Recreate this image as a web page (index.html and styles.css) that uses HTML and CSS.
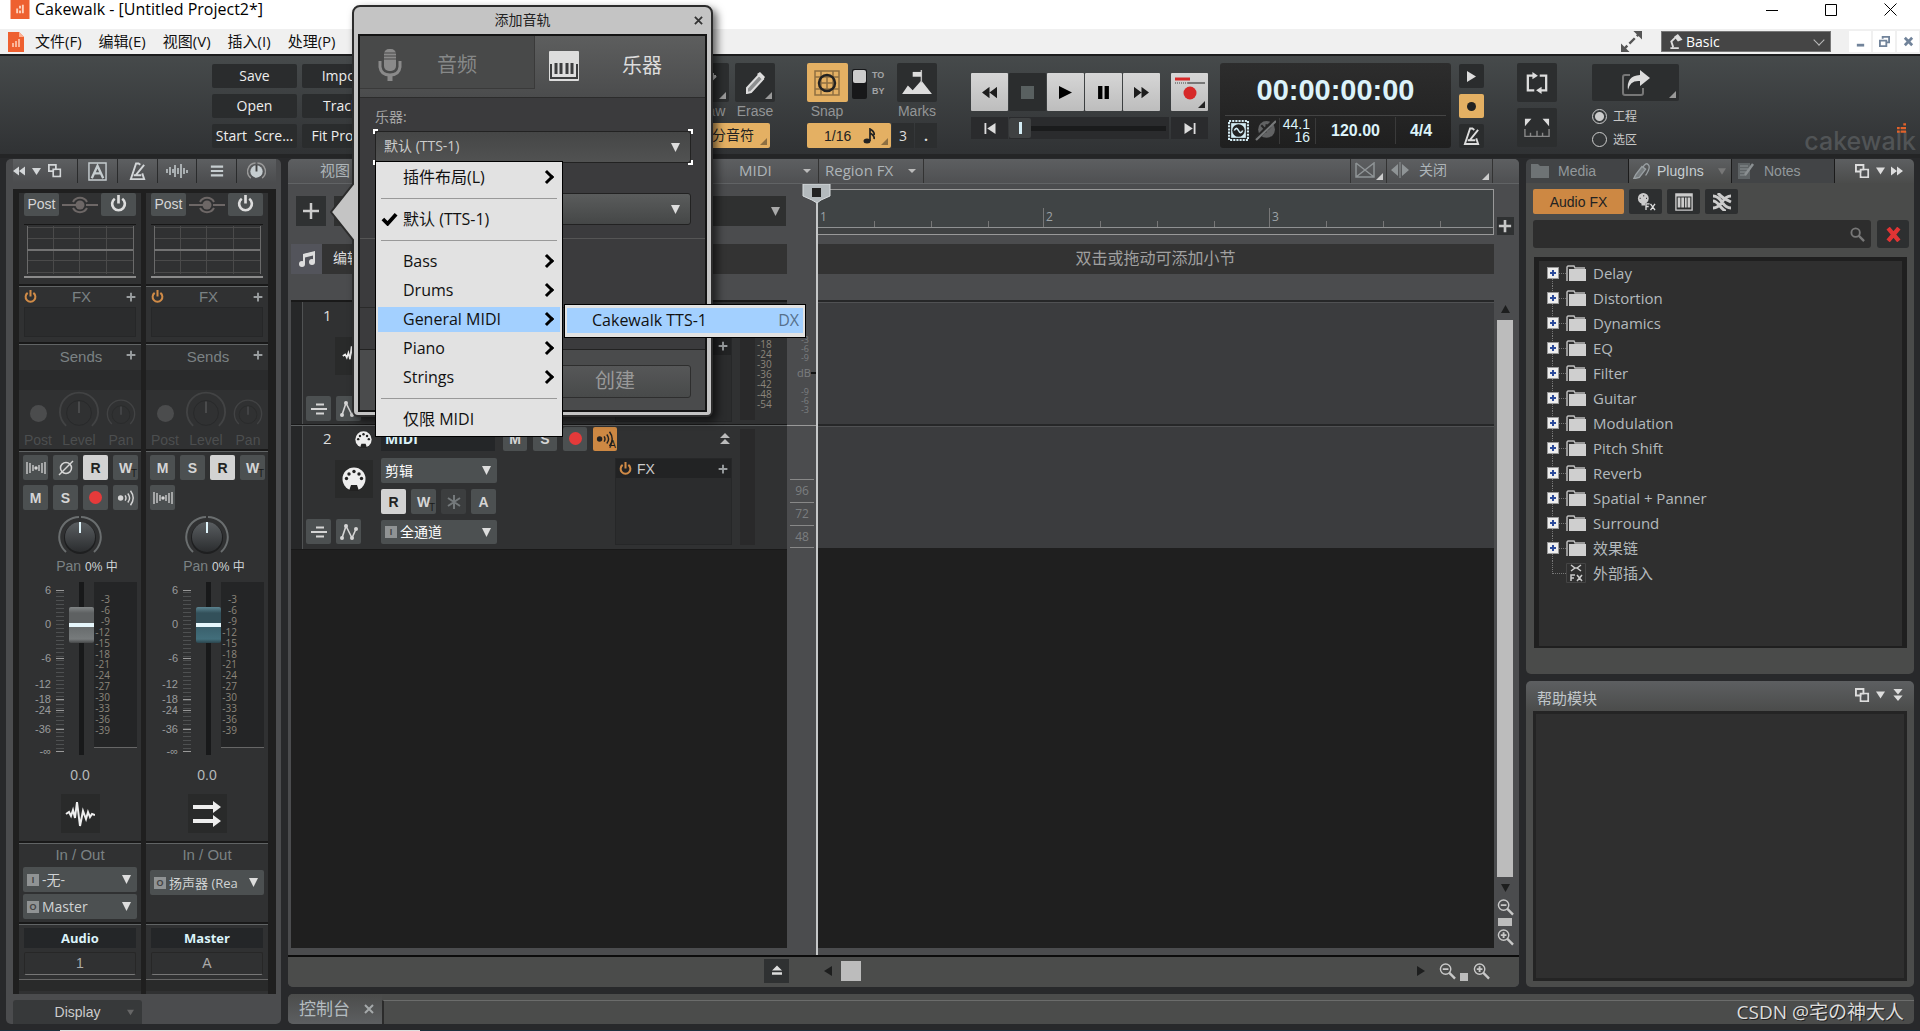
FILE: index.html
```html
<!DOCTYPE html>
<html lang="zh-CN">
<head>
<meta charset="utf-8">
<title>Cakewalk - [Untitled Project2*]</title>
<link rel="stylesheet" href="styles.css">
</head>
<body>
<svg class="defs" aria-hidden="true">
  <symbol id="power" viewBox="0 0 16 16"><path d="M4.500 3.500a6 6 0 1 0 7 0M8 0v8" fill="none" stroke="currentColor" stroke-width="2.500"/></symbol>
  <symbol id="plus" viewBox="0 0 16 16"><path d="M8 1v14M1 8h14" stroke="currentColor" stroke-width="3"/></symbol>
  <symbol id="dock" viewBox="0 0 16 16"><path d="M1 1h8v7H1zM6 6h8v8H6z" fill="none" stroke="currentColor" stroke-width="2"/><path d="M7 7h6v6H7z" fill="#505254"/></symbol>
  <symbol id="down" viewBox="0 0 10 10"><path d="M0 1h10L5 9z" fill="currentColor"/></symbol>
  <symbol id="ffwd" viewBox="0 0 16 12"><path d="M0 0l8 6-8 6zM8 0l8 6-8 6z" fill="currentColor"/></symbol>
  <symbol id="rewd" viewBox="0 0 16 12"><path d="M8 0L0 6l8 6zM16 0L8 6l8 6z" fill="currentColor"/></symbol>
  <symbol id="metro" viewBox="0 0 18 20"><path d="M12 3L10 1.500H7.500L2 18h14l-2-6" fill="none" stroke="currentColor" stroke-width="2"/><path d="M7 14L16 3M5 14h8" stroke="currentColor" stroke-width="2"/></symbol>
  <symbol id="inter" viewBox="0 0 20 12"><path d="M1 0v12M4 1v10M7 3v6M13 3v6M16 1v10M19 0v12" stroke="currentColor" stroke-width="1.300"/><circle cx="10" cy="6" r="1.700" fill="currentColor"/></symbol>
  <symbol id="phase" viewBox="0 0 18 18"><circle cx="9" cy="9" r="5.500" fill="none" stroke="currentColor" stroke-width="1.500"/><path d="M2 16L16 2" stroke="currentColor" stroke-width="1.500"/></symbol>
  <symbol id="echo" viewBox="0 0 20 18"><circle cx="4" cy="9" r="3" fill="currentColor"/><path d="M9 6q2 3 0 6M12 4q4 5 0 10M15 1q6 8 0 16" fill="none" stroke="currentColor" stroke-width="1.600"/></symbol>
  <symbol id="wave" viewBox="0 0 30 26"><path d="M1 13l3-2 2 4 2-6 2 8 2-16 3 24 3-15 3 8 2-7 2 5 2-3 3 1" fill="none" stroke="currentColor" stroke-width="2"/></symbol>
  <symbol id="din" viewBox="0 0 24 24"><circle cx="12" cy="12" r="11.500" fill="currentColor"/><g fill="#222"><circle cx="4.500" cy="11.500" r="1.700"/><circle cx="7" cy="7" r="1.700"/><circle cx="12" cy="4.500" r="1.700"/><circle cx="17" cy="7" r="1.700"/><circle cx="19.500" cy="11.500" r="1.700"/><path d="M7 24l2-6h6l2 6z"/></g></symbol>
  <symbol id="lanes" viewBox="0 0 16 12"><path d="M5 1.500h8M0 6h9M8 6h8M5 10.500h8" stroke="currentColor" stroke-width="2"/></symbol>
  <symbol id="auto" viewBox="0 0 18 16"><path d="M2 14L6 2l6 12 4-9" fill="none" stroke="currentColor" stroke-width="1.600"/><g fill="currentColor"><circle cx="2" cy="14" r="2"/><circle cx="6" cy="2" r="2"/><circle cx="12" cy="14" r="2"/><circle cx="16" cy="5" r="2"/></g></symbol>
  <symbol id="corner" viewBox="0 0 8 8"><path d="M8 0v8H0z" fill="currentColor"/></symbol>
  <symbol id="mago" viewBox="0 0 18 18"><circle cx="7" cy="7" r="5.500" fill="none" stroke="currentColor" stroke-width="1.500"/><path d="M11 11l6 6" stroke="currentColor" stroke-width="2.500"/><path d="M4 7h6" stroke="currentColor" stroke-width="2"/></symbol>
  <symbol id="magi" viewBox="0 0 18 18"><circle cx="7" cy="7" r="5.500" fill="none" stroke="currentColor" stroke-width="1.500"/><path d="M11 11l6 6" stroke="currentColor" stroke-width="2.500"/><path d="M4 7h6M7 4v6" stroke="currentColor" stroke-width="2"/></symbol>
  <symbol id="biglevel" viewBox="0 0 44 44"><path d="M8.500 36.500A20 20 0 1 1 35.500 36.500" fill="none" stroke="#424344" stroke-width="2"/><circle cx="22" cy="23" r="13" fill="#303132" stroke="#28292a"/><path d="M22 11v12" stroke="#4c4d4e" stroke-width="2"/></symbol>
  <symbol id="panknob" viewBox="0 0 44 44"><path d="M8 37A20 20 0 0 1 21 2M23 2A20 20 0 0 1 36 37" fill="none" stroke="#6a6e6f" stroke-width="2"/><circle cx="22" cy="23" r="16" fill="#1e1f20"/><circle cx="22" cy="22" r="15" fill="url(#knobfill)"/><path d="M22 7v11" stroke="#dff4fb" stroke-width="2"/></symbol>
  <symbol id="patch" viewBox="0 0 36 18"><path d="M0 9h18M24 9h12" stroke="#6d6766" stroke-width="2"/><circle cx="18" cy="9" r="4.500" fill="#6d6766"/><path d="M11 6a8 8 0 0 1 14 0M11 12a8 8 0 0 0 14 0" fill="none" stroke="#6d6766" stroke-width="2"/></symbol>
  <symbol id="eqgrid" viewBox="0 0 112 54"><path d="M0 .5h112" stroke="#171717"/><path d="M29.500 2v48M55.500 2v48M82.500 2v48M3 14.500h106M3 36.500h106M3 48.500h106M3 3.500h106" stroke="#4a4a4a"/><path d="M3.500 2v48M109.500 2v48" stroke="#6a6a6a"/><path d="M3 26h106" stroke="#727272" stroke-width="2"/><path d="M0 53h112" stroke="#8a8a8a" stroke-width="2"/></symbol>
  <symbol id="folder" viewBox="0 0 21 17"><path d="M1 16V2l1-1h6l1 2h10" fill="none" stroke="#bdbdbd" stroke-width="1.500"/><path d="M3 4h17v12H3z" fill="#cfcfcf"/></symbol>
  <symbol id="keys" viewBox="0 0 30 30"><rect width="30" height="30" rx="1" fill="currentColor"/><path d="M2 13v14h26V13" fill="none" stroke="#3c3d3e" stroke-width="2"/><path d="M7 12v11M12 12v11M18 12v11M23 12v11" stroke="#3c3d3e" stroke-width="3"/></symbol>
  <linearGradient id="knobfill" x1="0" y1="0" x2="0" y2="1"><stop offset="0" stop-color="#5a5e61"/><stop offset="1" stop-color="#2b2d2f"/></linearGradient>
</svg>

<div class="app">
  <header class="titlebar">
    <svg class="app-icon" viewBox="0 0 20 20"><path d="M0 0h20v20H0z" fill="#ee6030"/><path d="M7 9v5M10 6v3M10 11v3M13 5v9" stroke="#ffd2bd" stroke-width="2"/></svg>
    <h1>Cakewalk - [Untitled Project2*]</h1>
    <div class="win-buttons">
      <button aria-label="最小化"><svg viewBox="0 0 13 13"><path d="M0 7.500h12" stroke="#000"/></svg></button>
      <button aria-label="最大化"><svg viewBox="0 0 13 13"><path d="M.5 1.500h11v11H.5z" fill="none" stroke="#000"/></svg></button>
      <button aria-label="关闭窗口"><svg viewBox="0 0 13 13"><path d="M.5.5l12 12M12.500.5l-12 12" stroke="#000"/></svg></button>
    </div>
  </header>

  <nav class="menubar">
    <svg class="doc-icon" viewBox="0 0 16 20"><path d="M0 0h11l5 5v15H0z" fill="#ee6030"/><path d="M11 0v5h5z" fill="#ffb193"/><path d="M5 11v4M8 9v6M11 7v8" stroke="#ffd2bd" stroke-width="1.500"/></svg>
    <a href="#">文件(F)</a><a href="#">编辑(E)</a><a href="#">视图(V)</a><a href="#">插入(I)</a><a href="#">处理(P)</a>
    <div class="menubar-right">
      <svg class="expand" viewBox="0 0 22 22"><path d="M1 21L21 1" stroke="#555" stroke-width="2.500" stroke-dasharray="8 3"/><path d="M13 0h9v9zM0 13v9h9z" fill="#555"/></svg>
      <label class="basic"><svg viewBox="0 0 14 16"><path d="M1 15h9M4 14L2 8l5-5" fill="none" stroke="#ddd" stroke-width="2"/><path d="M5 3l4-3 5 6-5 2z" fill="#ddd"/></svg><select aria-label="工作区"><option>Basic</option></select></label>
      <div class="mdi">
        <button aria-label="最小化项目"><svg viewBox="0 0 12 14"><path d="M2 11h8" stroke="#71839a" stroke-width="3"/></svg></button>
        <button aria-label="还原项目"><svg viewBox="0 0 12 14"><path d="M4 4V2h7v6H9M1 6h7v6H1z" fill="none" stroke="#71839a" stroke-width="2"/></svg></button>
        <button aria-label="关闭项目"><svg viewBox="0 0 12 14"><path d="M2 3l8 8M10 3l-8 8" stroke="#71839a" stroke-width="3"/></svg></button>
      </div>
    </div>
  </nav>

  <section class="toolbar">
    <div class="commands">
      <button>Save</button><button>Import</button>
      <button>Open</button><button>Tracks</button>
      <button>Start&nbsp; Scre...</button><button>Fit Project</button>
    </div>
    <div class="tools">
      <div class="tool-row">
        <div class="tool"><button class="dark-btn" aria-label="Draw"><svg class="glyph" viewBox="0 0 22 22"><path d="M4 18L18 4M15 1v6M12 4h6" stroke="#ccc" stroke-width="2"/></svg><svg class="corner"><use href="#corner"/></svg></button><span>Draw</span></div>
        <div class="tool"><button class="dark-btn" aria-label="Erase"><svg class="glyph" viewBox="0 0 22 22"><path d="M3 16L15 3l4 4L7 20l-4 1z" fill="#8d8f90" stroke="#ddd" stroke-width="2"/><path d="M13 2l3-2 5 5-2 3z" fill="#ddd"/></svg><svg class="corner"><use href="#corner"/></svg></button><span>Erase</span></div>
      </div>
      <button class="amber note">分音符<svg class="corner"><use href="#corner"/></svg></button>
    </div>
    <div class="snap">
      <div class="tool-row">
        <div class="tool"><button class="amber snap-btn" aria-label="Snap"><svg viewBox="0 0 26 26"><path d="M1 1h24v24H1zM1 7h24M1 19h24M7 1v24M19 1v24M13 5v16M5 13h16" fill="none" stroke="#8e6f42" stroke-width="1.500"/><circle cx="13" cy="13" r="8" fill="none" stroke="#222" stroke-width="2.500"/></svg></button><span>Snap</span></div>
        <button class="toby" aria-label="TO / BY"></button>
        <div class="toby-labels"><span>TO</span><span>BY</span></div>
        <div class="tool"><button class="dark-btn" aria-label="Marks"><svg class="marks" viewBox="0 0 32 26"><path d="M0 25l6-9 5 5 9-10 11 14z" fill="#ddd"/><path d="M20 0v13" stroke="#bbb" stroke-width="1.500"/><path d="M11 2h9v5h-9z" fill="#ddd"/></svg></button><span>Marks</span></div>
      </div>
      <div class="res-row">
        <button class="amber res">1/16<svg class="n16" viewBox="0 0 12 16"><ellipse cx="4" cy="13" rx="3.500" ry="2.500" fill="#222"/><path d="M7 13V1q5 3 4 6M7 5q5 3 4 6" fill="none" stroke="#222" stroke-width="1.700"/></svg><svg class="corner"><use href="#corner"/></svg></button>
        <button class="flat">3</button><button class="flat">.</button>
      </div>
    </div>
    <div class="transport">
      <button class="tp" aria-label="快退"><svg viewBox="0 0 16 12"><use href="#rewd"/></svg></button>
      <button class="tp off" aria-label="停止"><svg viewBox="0 0 12 12"><path d="M0 0h12v12H0z" fill="#596060"/></svg></button>
      <button class="tp" aria-label="播放"><svg viewBox="0 0 12 12"><path d="M0 0l12 6-12 6z"/></svg></button>
      <button class="tp" aria-label="暂停"><svg viewBox="0 0 12 12"><path d="M1 0h4v12H1zM7 0h4v12H7z"/></svg></button>
      <button class="tp" aria-label="快进"><svg viewBox="0 0 16 12"><use href="#ffwd"/></svg></button>
      <button class="tp rec" aria-label="录音"><svg viewBox="0 0 37 37"><path d="M4 5h15" stroke="#d62828" stroke-width="3"/><path d="M4 9h14" stroke="#888" stroke-width="2" stroke-dasharray="1 1"/><path d="M17 9h17" stroke="#777" stroke-width="2"/><circle cx="19" cy="19" r="6.500" fill="#d62828"/><path d="M34 27v7h-7z" fill="#222"/></svg></button>
      <button class="tp2" aria-label="到开头"><svg viewBox="0 0 12 12"><path d="M1 0v12" stroke="#ddd" stroke-width="2"/><path d="M12 0v12L3 6z" fill="#ddd"/></svg></button>
      <label class="scrub"><input type="range" min="0" max="100" value="0" aria-label="播放位置"></label>
      <button class="tp2 end" aria-label="到结尾"><svg viewBox="0 0 12 12"><path d="M11 0v12" stroke="#ddd" stroke-width="2"/><path d="M0 0v12l9-6z" fill="#ddd"/></svg></button>
    </div>
    <div class="clock">
      <output class="time">00:00:00:00</output>
      <div class="clock-row">
        <svg class="chip" viewBox="0 0 20 20"><path d="M1 1h18v18H1z" fill="none" stroke="#d4ecf4" stroke-width="2" stroke-dasharray="2 1"/><path d="M3 3h14v14H3z" fill="#d4ecf4"/><circle cx="10" cy="10" r="6" fill="#222"/><path d="M6 10q2-4 4 0t4 0" fill="none" stroke="#d4ecf4" stroke-width="1.500"/></svg>
        <svg class="chip" viewBox="0 0 20 20"><circle cx="11" cy="9" r="8" fill="#626364"/><path d="M6 5l3 3M11 4v4M15 6l-3 3M7 11h4" stroke="#262626" stroke-width="2"/><path d="M0 19L19 0" stroke="#262626" stroke-width="4"/><path d="M1 19L20 1" stroke="#77797a" stroke-width="2"/></svg>
        <span class="rate"><b>44.1</b><b>16</b></span><span class="tempo">120.00</span><span class="sig">4/4</span>
      </div>
    </div>
    <div class="modes">
      <button aria-label="播放模式"><svg viewBox="0 0 10 12"><path d="M0 0l10 6-10 6z" fill="#ddd"/></svg></button>
      <button class="amber" aria-label="录音模式"><svg viewBox="0 0 10 12"><circle cx="5" cy="6" r="5" fill="#222"/></svg></button>
      <button aria-label="节拍器"><svg class="m" viewBox="0 0 18 20"><use href="#metro"/></svg></button>
    </div>
    <div class="loops">
      <button aria-label="循环"><svg viewBox="0 0 24 24"><path d="M9 4H2v16h7M15 4h7v16h-7" fill="none" stroke="#ddd" stroke-width="2.500"/><path d="M7 0l6 4-6 4zM17 16l-6 4 6 4z" fill="#ddd"/></svg></button>
      <button aria-label="穿插"><svg viewBox="0 0 28 20"><path d="M1 0h7L1 8zM27 0h-7l7 8z" fill="#ddd"/><path d="M1 11v8h26v-8M7 15v4M14 13v6M20 15v4" fill="none" stroke="#888" stroke-width="1.500"/></svg></button>
    </div>
    <div class="export">
      <button class="dark-btn" aria-label="导出"><svg class="share" viewBox="0 0 28 26"><path d="M8 5H3q-2 0-2 2v16q0 2 2 2h16q2 0 2-2v-5" fill="none" stroke="#777" stroke-width="2"/><path d="M6 20Q4 6 18 5V0l10 8-10 8v-5Q8 10 6 20z" fill="#ddd"/></svg><svg class="corner"><use href="#corner"/></svg></button>
      <label><input type="radio" name="scope" checked>工程</label>
      <label><input type="radio" name="scope">选区</label>
    </div>
    <div class="logo"><svg viewBox="0 0 10 10"><path d="M0 5h3M0 9h3M4 5h3M4 9h3M7 1h3M7 5h3M7 9h3" stroke="#e2622a" stroke-width="2.500"/></svg><span>cakewalk</span></div>
  </section>

  <main class="workspace">
    <aside class="inspector">
      <div class="insp-tabs">
        <button class="wide" aria-label="停靠"><svg class="w14"><use href="#rewd"/></svg><svg class="w10"><use href="#down"/></svg><svg class="w15"><use href="#dock"/></svg></button>
        <button aria-label="剪辑属性"><svg viewBox="0 0 20 20"><path d="M1 1h18v18H1z" fill="none" stroke="#c6cdd0" stroke-width="1.500"/><path d="M4 17L10 4l6 13M6 12h8" fill="none" stroke="#c6cdd0" stroke-width="2.500"/></svg></button>
        <button aria-label="节拍"><svg><use href="#metro"/></svg></button>
        <button aria-label="波形"><svg class="w22" viewBox="0 0 22 16"><path d="M1 6v4M4 4v8M7 6v4M9 2v12M12 5v6M15 1v14M18 5v6M21 7v3" stroke="#c6cdd0" stroke-width="1.500"/></svg></button>
        <button aria-label="列表"><svg class="w15" viewBox="0 0 16 16"><path d="M1 3h14M1 8h14M1 13h14" stroke="#c6cdd0" stroke-width="2.500"/></svg></button>
        <button aria-label="通道"><svg viewBox="0 0 20 20"><path d="M4 17A9 9 0 0 1 9 1M11 1a9 9 0 0 1 5 16" fill="none" stroke="#999" stroke-width="1.500"/><circle cx="10" cy="10" r="6.500" fill="#c6cdd0"/><path d="M10 3v7" stroke="#444" stroke-width="2"/></svg></button>
      </div>
      <div class="strips">
        <article class="strip">
          <section class="s-eq"><div class="eq-top"><button>Post</button><svg class="patch"><use href="#patch"/></svg><button aria-label="EQ 开关"><svg class="pw"><use href="#power"/></svg></button></div><svg class="eqgrid"><use href="#eqgrid"/></svg></section>
          <section class="s-fx"><div class="cap"><svg class="on"><use href="#power"/></svg><span>FX</span><svg class="add"><use href="#plus"/></svg></div><div class="fxbox"></div></section>
          <section class="s-send"><div class="cap"><i></i><span>Sends</span><svg class="add"><use href="#plus"/></svg></div><div class="band"></div><div class="knobs"><div><em></em><span>Post</span></div><div><svg class="k44"><use href="#biglevel"/></svg><span>Level</span></div><div><svg class="k30"><use href="#biglevel"/></svg><span>Pan</span></div></div></section>
          <section class="s-mix">
            <div class="btns"><button aria-label="交错"><svg class="ic20"><use href="#inter"/></svg></button><button aria-label="反相"><svg class="ic18"><use href="#phase"/></svg></button><button class="lit">R</button><button>W<sub>T</sub></button><button>M</button><button>S</button><button aria-label="录音准备"><i class="dot"></i></button><button aria-label="输入监听"><svg class="ic18"><use href="#echo"/></svg></button></div>
            <svg class="pan"><use href="#panknob"/></svg>
            <p class="panval">Pan <b>0% 中</b></p>
            <div class="fader">
              <svg class="scale" viewBox="0 0 46 175"><path d="M33 8.500h8M33 42.500h8M33 76.500h8M33 102.500h8M33 117.500h8M33 128.500h8M33 147.500h8M33 169.500h8" stroke="#999"/><path d="M37 10v160" stroke="#4e5051" stroke-width="8" stroke-dasharray="1 3"/><text x="28" y="12">6</text><text x="28" y="46">0</text><text x="28" y="80">-6</text><text x="28" y="106">-12</text><text x="28" y="121">-18</text><text x="28" y="132">-24</text><text x="28" y="151">-36</text><text x="28" y="173">-∞</text></svg>
              <input type="range" min="0" max="100" value="82" aria-label="音量">
              <ol><li>-3</li><li>-6</li><li>-9</li><li>-12</li><li>-15</li><li>-18</li><li>-21</li><li>-24</li><li>-27</li><li>-30</li><li>-33</li><li>-36</li><li>-39</li></ol>
            </div>
            <p class="gain">0.0</p>
            <div class="kind"><svg><use href="#wave"/></svg></div>
          </section>
          <section class="s-io"><h3>In / Out</h3><label class="combo"><b>I</b><select aria-label="输入"><option>-无-</option></select></label><label class="combo"><b>O</b><select aria-label="输出"><option>Master</option></select></label></section>
          <section class="s-name"><strong>Audio</strong><span>1</span></section>
        </article>
        <article class="strip">
          <section class="s-eq"><div class="eq-top"><button>Post</button><svg class="patch"><use href="#patch"/></svg><button aria-label="EQ 开关"><svg class="pw"><use href="#power"/></svg></button></div><svg class="eqgrid"><use href="#eqgrid"/></svg></section>
          <section class="s-fx"><div class="cap"><svg class="on"><use href="#power"/></svg><span>FX</span><svg class="add"><use href="#plus"/></svg></div><div class="fxbox"></div></section>
          <section class="s-send"><div class="cap"><i></i><span>Sends</span><svg class="add"><use href="#plus"/></svg></div><div class="band"></div><div class="knobs"><div><em></em><span>Post</span></div><div><svg class="k44"><use href="#biglevel"/></svg><span>Level</span></div><div><svg class="k30"><use href="#biglevel"/></svg><span>Pan</span></div></div></section>
          <section class="s-mix">
            <div class="btns"><button>M</button><button>S</button><button class="lit">R</button><button>W<sub>T</sub></button><button aria-label="交错"><svg class="ic20"><use href="#inter"/></svg></button></div>
            <svg class="pan"><use href="#panknob"/></svg>
            <p class="panval">Pan <b>0% 中</b></p>
            <div class="fader blue">
              <svg class="scale" viewBox="0 0 46 175"><path d="M33 8.500h8M33 42.500h8M33 76.500h8M33 102.500h8M33 117.500h8M33 128.500h8M33 147.500h8M33 169.500h8" stroke="#999"/><path d="M37 10v160" stroke="#4e5051" stroke-width="8" stroke-dasharray="1 3"/><text x="28" y="12">6</text><text x="28" y="46">0</text><text x="28" y="80">-6</text><text x="28" y="106">-12</text><text x="28" y="121">-18</text><text x="28" y="132">-24</text><text x="28" y="151">-36</text><text x="28" y="173">-∞</text></svg>
              <input type="range" min="0" max="100" value="82" aria-label="主音量">
              <ol><li>-3</li><li>-6</li><li>-9</li><li>-12</li><li>-15</li><li>-18</li><li>-21</li><li>-24</li><li>-27</li><li>-30</li><li>-33</li><li>-36</li><li>-39</li></ol>
            </div>
            <p class="gain">0.0</p>
            <div class="kind"><svg viewBox="0 0 30 26"><path d="M1 4h20V0l8 6-8 6V8H1zM1 18h20v-4l8 6-8 6v-4H1z" fill="#eee"/></svg></div>
          </section>
          <section class="s-io one"><h3>In / Out</h3><label class="combo"><b>O</b><select aria-label="主输出"><option>扬声器 (Rea</option></select></label></section>
          <section class="s-name"><strong>Master</strong><span>A</span></section>
        </article>
      </div>
      <button class="display">Display<svg><use href="#down"/></svg></button>
    </aside>

    <section class="arranger">
      <div class="arr-head">
        <button class="tab view">视图</button><button class="tab">MIDI<i></i></button><button class="tab region">Region FX<i></i></button>
        <button class="tab fade" aria-label="交叉淡化"><svg class="xf" viewBox="0 0 20 16"><path d="M1 1v14h18V1L1 15M1 1l18 14" fill="none" stroke="#8f9496" stroke-width="1.500"/></svg><svg class="corner"><use href="#corner"/></svg></button><button class="tab close"><svg class="rip" viewBox="0 0 18 16"><path d="M7 2L0 8l7 6zM11 2l7 6-7 6z" fill="#8f9496"/><path d="M9 0v16" stroke="#8f9496"/></svg>关闭<svg class="corner"><use href="#corner"/></svg></button>
      </div>
      <div class="arr-body">
        <div class="tracks">
          <div class="t-tools"><button class="addtrack" aria-label="添加音轨"><svg viewBox="0 0 16 16"><path d="M8 0v16M0 8h16" stroke="#ccc" stroke-width="2.500"/></svg></button><label class="filter"><select aria-label="预设"><option></option></select></label></div>
          <div class="t-edit"><svg viewBox="0 0 31 30"><path d="M13 20V11l10-2v9" fill="none" stroke="#ddd" stroke-width="2"/><path d="M12 10l12-3v4l-12 3z" fill="#ddd"/><circle cx="11" cy="20" r="3" fill="#ddd"/><circle cx="21" cy="18" r="3" fill="#ddd"/></svg><span>编辑</span></div>
          <div class="t-list">
            <article class="track">
              <div class="t-left"><span class="num">1</span><span class="kindbox"><svg><use href="#wave"/></svg></span><div class="t-foot"><button aria-label="音轨层"><svg class="ic16"><use href="#lanes"/></svg></button><button aria-label="自动化"><svg class="ic18"><use href="#auto"/></svg></button></div></div>
              <div class="t-main"><div class="t-r1"></div><div class="t-r2"><div></div><div class="t-fx"><div><svg class="on"><use href="#power"/></svg><span>FX</span><svg class="add"><use href="#plus"/></svg></div></div></div></div>
              <div class="t-meter"><i></i><ol><li>-18</li><li>-24</li><li>-30</li><li>-36</li><li>-42</li><li>-48</li><li>-54</li></ol></div>
            </article>
            <article class="track">
              <div class="t-left"><span class="num">2<svg class="ic18"><use href="#din"/></svg></span><span class="kindbox"><svg><use href="#din"/></svg></span><div class="t-foot"><button aria-label="音轨层"><svg class="ic16"><use href="#lanes"/></svg></button><button aria-label="自动化"><svg class="ic18"><use href="#auto"/></svg></button></div></div>
              <div class="t-main">
                <div class="t-r1"><strong>MIDI</strong><button>M</button><button>S</button><button aria-label="录音准备"><i class="dot"></i></button><button class="orange" aria-label="输入回放"><svg class="ic18"><use href="#echo"/></svg><sub>A</sub></button><svg class="coll" viewBox="0 0 10 12"><path d="M5 0l5 5H0zM5 6l5 5H0z" fill="#bbb"/></svg></div>
                <div class="t-r2"><div class="t-ctl"><label class="combo"><select aria-label="编辑筛选"><option>剪辑</option></select></label><div class="t-b"><button class="lit">R</button><button>W<sub>T</sub></button><button class="dim" aria-label="冻结"><svg viewBox="0 0 16 16"><path d="M8 1v14M2 4l12 8M14 4L2 12" stroke="#74797b" stroke-width="2"/></svg></button><button>A</button></div><label class="combo"><b>I</b><select aria-label="通道"><option>全通道</option></select></label></div><div class="t-fx"><div><svg class="on"><use href="#power"/></svg><span>FX</span><svg class="add"><use href="#plus"/></svg></div></div></div>
              </div>
              <div class="t-meter"><i></i></div>
            </article>
          </div>
        </div>
        <div class="vscale">
          <div class="vs1"><span>-3</span><span>-6</span><span>-9</span><span class="db">dB<i></i></span><span>-9</span><span>-6</span><span>-3</span></div>
          <div class="vs2"><span>96</span><span>72</span><span>48</span></div>
        </div>
        <div class="clips">
          <div class="ruler"><div class="bar"><span>1</span></div><div class="bar"><span>2</span></div><div class="bar"><span>3</span></div></div>
          <div class="lane-hint">双击或拖动可添加小节</div>
          <div class="lanes"><div></div><div></div></div>
          <div class="playhead"><svg viewBox="0 0 29 19"><path d="M1 0h27v12l-9 4-4 3-5-3-9-4z" fill="#b4babd" stroke="#d8dcde"/><path d="M10 4h9v9h-9z" fill="#222"/></svg></div>
        </div>
        <div class="vscroll">
          <button class="vadd" aria-label="添加轨道窗格"><svg><use href="#plus"/></svg></button>
          <svg class="up" viewBox="0 0 10 10"><path d="M5 0l5 9H0z" fill="#1d1e1e"/></svg><div class="vthumb"></div><svg class="up" viewBox="0 0 10 10"><path d="M0 1h10L5 10z" fill="#1d1e1e"/></svg>
          <svg class="mg"><use href="#mago"/></svg><i></i><svg class="mg"><use href="#magi"/></svg>
        </div>
      </div>
      <div class="arr-foot">
        <button class="eject" aria-label="展开总线"><svg viewBox="0 0 12 12"><path d="M6 0l6 6H0zM0 8h12v3H0z" fill="#ddd"/></svg></button>
        <div class="hscroll"><svg class="ar" viewBox="0 0 8 10"><path d="M8 0v10L0 5z" fill="#1d1e1e"/></svg><i class="hthumb"></i><svg class="ar rt" viewBox="0 0 8 10"><path d="M0 0v10l8-5z" fill="#1d1e1e"/></svg><svg class="mg"><use href="#mago"/></svg><i class="hz"></i><svg class="mg"><use href="#magi"/></svg></div>
      </div>
    </section>

    <div class="side">
      <section class="browser">
        <div class="b-tabs">
          <button><svg viewBox="0 0 18 16"><path d="M0 1h7l2 2h9v12H0z" fill="#6e7375"/></svg>Media</button>
          <button class="cur"><svg viewBox="0 0 20 18"><path d="M1 17l2-4 7-9 4 3-7 9-4 1z" fill="#777c7e" stroke="#999fa2" stroke-width="1.500"/><path d="M11 5q3-6 6-3t-3 12" fill="none" stroke="#999fa2" stroke-width="1.500"/></svg>PlugIns<svg class="tri"><use href="#down"/></svg></button>
          <button><svg viewBox="0 0 18 18"><path d="M1 1h12v16H1z" fill="#5f6466"/><path d="M3 4h8M3 7h8M3 10h6M3 13h6" stroke="#8b9092"/><path d="M8 13l8-11" stroke="#8b9092" stroke-width="2.500"/></svg>Notes</button>
          <div class="b-ctl"><svg class="w15"><use href="#dock"/></svg><svg class="w10"><use href="#down"/></svg><svg class="w14"><use href="#ffwd"/></svg></div>
        </div>
        <div class="b-kinds"><button class="afx">Audio FX</button>
          <button aria-label="MIDI FX"><svg viewBox="0 0 22 20"><circle cx="8" cy="6" r="6" fill="#ccc"/><path d="M6 9h4v5H6z" fill="#ccc"/><path d="M4 6h1M8 3h1M11 6h1" stroke="#333" stroke-width="1.500"/><path d="M11 19v-7h4M11 15h3M16 12l5 7M21 12l-5 7" fill="none" stroke="#ddd" stroke-width="1.500"/></svg></button>
          <button aria-label="乐器"><svg class="key" viewBox="0 0 20 20"><path d="M1 1h18v18H1z" fill="none" stroke="#ccc" stroke-width="1.500"/><path d="M1 1h18v3H1zM3 5h3v11H3zM7 5h3v11H7zM11 5h2v11h-2zM14 5h3v11h-3z" fill="#ccc"/></svg></button>
          <button aria-label="ReWire"><svg viewBox="0 0 20 18"><path d="M1 3q5 0 9 6t9 6M1 8q3 0 7 5t6 5M6 0q4 5 13 9M1 15q5 0 9-6t9-6" fill="none" stroke="#ccc" stroke-width="3"/></svg></button>
        </div>
        <div class="b-search"><label><input type="text" aria-label="搜索插件"><svg viewBox="0 0 16 16"><circle cx="6" cy="6" r="4.500" fill="none" stroke="#777" stroke-width="2"/><path d="M9 9l6 6" stroke="#777" stroke-width="2.500"/></svg></label><button aria-label="清除"><svg viewBox="0 0 14 14"><path d="M2 1l10 12M12 1L2 13" stroke="#e03434" stroke-width="4"/></svg></button></div>
        <ul class="tree">
          <li><i></i><svg><use href="#folder"/></svg>Delay</li><li><i></i><svg><use href="#folder"/></svg>Distortion</li><li><i></i><svg><use href="#folder"/></svg>Dynamics</li><li><i></i><svg><use href="#folder"/></svg>EQ</li><li><i></i><svg><use href="#folder"/></svg>Filter</li><li><i></i><svg><use href="#folder"/></svg>Guitar</li><li><i></i><svg><use href="#folder"/></svg>Modulation</li><li><i></i><svg><use href="#folder"/></svg>Pitch Shift</li><li><i></i><svg><use href="#folder"/></svg>Reverb</li><li><i></i><svg><use href="#folder"/></svg>Spatial + Panner</li><li><i></i><svg><use href="#folder"/></svg>Surround</li><li><i></i><svg><use href="#folder"/></svg>效果链</li>
          <li class="leaf"><svg viewBox="0 0 20 20"><path d="M.5.5h19v19H.5z" fill="none" stroke="#454545"/><path d="M5 2l4 3h2l4-3M5 8l4-3h2l4 3M5 18v-6h4M5 15h3M11 12l5 6M16 12l-5 6" fill="none" stroke="#ccc" stroke-width="1.500"/></svg>外部插入</li>
        </ul>
      </section>
      <section class="help"><div class="h-head"><h2>帮助模块</h2><svg class="w15"><use href="#dock"/></svg><svg class="w10"><use href="#down"/></svg><svg class="dd" viewBox="0 0 10 13"><path d="M0 0h10L5 6zM0 7h10l-5 6z" fill="#ddd"/></svg></div><div class="h-body"></div></section>
    </div>

    <div class="dock">
      <div class="dock-tab">控制台<button aria-label="关闭控制台"><svg viewBox="0 0 10 10"><path d="M1 1l8 8M9 1L1 9" stroke="#a5a9aa" stroke-width="2"/></svg></button></div>
      <div class="dock-rest"><span class="mark">CSDN @宅の神大人</span></div>
    </div>
  </main>
  <div class="taskline"><i></i></div>
</div>

<section class="dialog" role="dialog" aria-label="添加音轨">
  <svg class="pointer" viewBox="0 0 24 58"><path d="M24 0L1 29l23 29" fill="#c4c4c4" stroke="#2c2c2c" stroke-width="2"/></svg>
  <div class="d-title"><h2>添加音轨</h2><button aria-label="关闭对话框"><svg viewBox="0 0 10 10"><path d="M1 1l8 8M9 1L1 9" stroke="#333" stroke-width="2"/></svg></button></div>
  <div class="d-in">
    <div class="d-tabs">
      <button class="audio"><svg viewBox="0 0 24 32"><rect x="6" width="12" height="22" rx="5" fill="#8a8a8a"/><path d="M6 4h12M6 7h12M6 10h12" stroke="#484848"/><path d="M2 12v6q1 8 10 8t10-8v-6" fill="none" stroke="#8a8a8a" stroke-width="3"/><path d="M12 25v7" stroke="#8a8a8a" stroke-width="5"/></svg><span>音频</span></button>
      <button class="inst"><svg viewBox="0 0 30 30"><use href="#keys"/></svg><span>乐器</span></button>
    </div>
    <div class="d-body">
      <label for="inst">乐器:</label>
      <div class="d-sel focus"><select id="inst"><option>默认 (TTS-1)</option></select></div>
      <div class="d-sel two"><select aria-label="输出端口"><option></option></select></div>
      <hr><hr class="low">
    </div>
    <div class="d-foot"><button>创建</button></div>
  </div>
</section>

<ul class="menu" role="menu">
  <li class="sub">插件布局(L)</li><li class="sep"></li>
  <li><svg viewBox="0 0 18 14"><path d="M2 7l5 5L16 2" fill="none" stroke="#000" stroke-width="4"/></svg>默认 (TTS-1)</li><li class="sep"></li>
  <li class="sub">Bass</li><li class="sub">Drums</li><li class="sub sel">General MIDI</li><li class="sub">Piano</li><li class="sub">Strings</li><li class="sep"></li>
  <li>仅限 MIDI</li>
</ul>
<ul class="menu submenu" role="menu"><li class="sel">Cakewalk TTS-1<span>DX</span></li></ul>
</body>
</html>
```
FILE: styles.css
```css
* { box-sizing: border-box; margin: 0; padding: 0; }
body { background: #28292b; color: #c8c8c8; font: 14px/18px "Open Sans", "Noto Sans CJK SC", sans-serif; }
ul, ol { list-style: none; }
i, em { font-style: normal; }
button, select, input { font: inherit; color: inherit; border: 0; background: none; }
select { appearance: none; outline: 0; width: 100%; min-width: 0; }
button { display: flex; align-items: center; justify-content: center; position: relative; }
svg { display: block; flex: none; }
a { color: inherit; text-decoration: none; }
.defs { position: absolute; width: 0; height: 0; }
.corner { position: absolute; right: 3px; bottom: 3px; width: 7px; height: 7px; color: #999; }
.w14 { width: 14px; height: 10px; } .w10 { width: 9px; height: 10px; } .w15 { width: 15px; height: 15px; }
.ic16 { width: 16px; height: 12px; } .ic18 { width: 18px; height: 18px; } .ic20 { width: 20px; height: 12px; }

.app { display: flex; flex-direction: column; min-height: 100vh; }

/* window chrome */
.titlebar { display: flex; align-items: flex-start; height: 29px; padding-left: 10px; background: #fff; color: #000; }
.app-icon { width: 20px; height: 19px; }
.titlebar h1 { flex: 1; padding-left: 5px; font-size: 16px; font-weight: 400; line-height: 18px; }
.win-buttons { display: flex; gap: 46px; padding: 3px 23px 0 0; }
.win-buttons svg { width: 13px; height: 13px; }
.menubar { display: flex; align-items: center; height: 25px; padding-left: 8px; background: #f0f0f0; color: #111; }
.menubar a { margin-right: 17px; line-height: 22px; font-size: 15px; padding-bottom: 2px; }
.doc-icon { width: 16px; height: 20px; margin-right: 11px; }
.menubar-right { display: flex; align-items: center; margin-left: auto; }
.expand { width: 21px; height: 21px; margin-right: 19px; }
.basic { display: flex; align-items: center; position: relative; width: 170px; height: 21px; padding-left: 7px; background: #454545; border: 1px solid #777; color: #fff; }
.basic svg { width: 14px; height: 15px; }
.basic select { padding-left: 3px; }
.basic::after { content: ""; position: absolute; right: 7px; top: 4px; width: 7px; height: 7px; border: solid #bbb; border-width: 0 1px 1px 0; transform: rotate(45deg); }
.mdi { display: flex; gap: 2px; padding: 0 1px 0 18px; }
.mdi button { width: 22px; height: 21px; background: #fff; }
.mdi svg { width: 11px; height: 13px; }

/* control bar */
.toolbar { display: flex; align-items: flex-start; height: 104px; padding: 7px 4px 0 212px; border-top: 2px solid #1c1d1e; border-bottom: 4px solid #242526; background: linear-gradient(#464a4b, #303234); }
.commands { display: grid; grid-template-columns: 85px 84px; gap: 6px 5px; padding-top: 1px; }
.commands button { height: 24px; background: #2a2c2d; color: #eee; border-radius: 2px; }
.tools { width: 120px; margin-left: 264px; }
.tool-row { display: flex; gap: 6px; justify-content: flex-end; height: 60px; }
.tools .tool-row { margin-right: -5px; }
.tool { display: flex; flex-direction: column; width: 40px; align-items: center; color: #939596; font-family: "Liberation Sans", sans-serif; }
.dark-btn { width: 40px; height: 39px; background: #2c2e2f; border-radius: 2px; }
.glyph { width: 22px; height: 22px; }
.amber { background: #e4b063; color: #222; border-radius: 2px; }
.amber .corner { color: #8d6f42; }
.note { width: 120px; height: 25px; justify-content: flex-end; padding: 0 16px 2px 0; }
.snap { width: 130px; margin-left: 37px; }
.snap .tool-row { gap: 5px; justify-content: flex-start; }
.snap-btn { width: 41px; height: 39px; }
.snap-btn svg { width: 26px; height: 26px; }
.toby { width: 15px; height: 30px; margin-top: 6px; background: #17181a; border-radius: 2px; align-items: flex-start; }
.toby::before { content: ""; width: 13px; height: 13px; margin-top: 1px; background: #ccc; border-radius: 2px; }
.toby-labels { display: flex; flex-direction: column; gap: 4px; width: 20px; padding-top: 6px; color: #a2a4a5; font: 700 9px/12px "Liberation Sans", sans-serif; }
.marks { width: 31px; height: 25px; }
.res-row { display: flex; gap: 1px; }
.res { width: 84px; height: 25px; justify-content: flex-start; padding-left: 17px; gap: 12px; font-family: "Liberation Sans", sans-serif; }
.n16 { width: 12px; height: 16px; }
.flat { flex: 1; height: 25px; background: #2c2e2f; color: #ddd; }
.flat:last-child { font-weight: 700; }
.transport { display: grid; grid-template-columns: repeat(6, 37px); column-gap: 1px; row-gap: 6px; margin: 10px 0 0 34px; }
.tp { height: 38px; background: linear-gradient(#d6d6d6, #bdbdbd); border-radius: 1px; color: #1d1d1d; }
.tp svg { width: 15px; height: 13px; }
.tp.off { background: #2b2d2e; }
.tp.rec { margin-left: 10px; width: 37px; }
.tp.rec svg { width: 37px; height: 37px; }
.tp2 { height: 22px; background: #2a2b2d; }
.tp2.end { width: 37px; margin-left: 10px; }
.tp2 svg { width: 12px; height: 11px; }
.scrub { grid-column: span 4; width: 160px; height: 22px; background: #2a2b2d; }
.scrub input { display: block; appearance: none; width: 157px; height: 22px; background: linear-gradient(transparent 9px, #1a1b1c 9px, #1a1b1c 14px, transparent 14px); }
.scrub input::-webkit-slider-thumb { appearance: none; width: 22px; height: 20px; border-radius: 2px; background: linear-gradient(90deg, transparent 10px, #d4ecf4 10px, #d4ecf4 13px, transparent 13px) no-repeat 0 4px / 22px 12px, #3f4142; }
.clock { width: 231px; height: 85px; margin-left: 22px; padding: 5px 5px 0; background: linear-gradient(#2d2d2d, #1f1f1f); border-radius: 3px; color: #dcf3fa; }
.time { display: block; height: 48px; border-bottom: 1px solid #444; text-align: center; font: 700 29px/44px "Liberation Sans", sans-serif; }
.clock-row { display: flex; align-items: center; height: 29px; }
.chip { width: 21px; height: 21px; margin: 0 3px; }
.rate { display: flex; flex-direction: column; align-items: flex-end; width: 37px; padding-right: 5px; border: solid #3a3a3a; border-width: 0 1px; font: 14px/13px "Liberation Sans", sans-serif; }
.rate b { font-weight: 400; }
.tempo, .sig { font: 700 16px/27px "Liberation Sans", sans-serif; }
.tempo { width: 80px; text-align: center; border-right: 1px solid #3a3a3a; }
.sig { flex: 1; text-align: center; }
.modes { display: grid; gap: 6px; margin: 1px 0 0 8px; }
.modes button { width: 25px; height: 24px; background-color: #2a2c2d; border-radius: 2px; }
.modes button.amber { background-color: #e4b063; }
.modes svg { width: 9px; height: 11px; color: #ddd; }
.modes .m { width: 17px; height: 19px; }
.loops { display: grid; gap: 6px; margin-left: 33px; }
.loops button { width: 40px; height: 39px; background: #2c2e2f; border-radius: 2px; }
.loops svg { width: 26px; height: 22px; }
.export { width: 87px; margin: 1px 0 0 35px; font-size: 12px; }
.export .dark-btn { width: 87px; height: 37px; margin-bottom: 4px; }
.share { width: 28px; height: 26px; }
.export label { display: flex; align-items: center; gap: 6px; height: 23px; }
.export input { appearance: none; width: 15px; height: 15px; border: 1px solid #ccc; border-radius: 50%; }
.export input:checked { background: radial-gradient(#ccc 4px, transparent 5px); }
.logo { position: relative; align-self: flex-end; margin-left: auto; color: #515456; font: 500 25px/26px "Inter", sans-serif; }
.logo svg { position: absolute; right: 10px; top: -5px; width: 9px; height: 10px; }

/* workspace */
.workspace { flex: 1; display: grid; grid-template-columns: 274px 1fr 388px; grid-template-rows: 1fr 30px; column-gap: 7px; row-gap: 7px; padding: 1px 6px 6px; }
.inspector { grid-row: span 2; margin-right: -1px; display: flex; flex-direction: column; padding: 0 5px 0 7px; background: #4b4c4e; border-radius: 5px; }
.insp-tabs { display: flex; height: 24px; margin-bottom: 6px; gap: 1px; background: #2a2b2c; }
.insp-tabs button { flex: 1; background: linear-gradient(#5d5f61, #4b4c4e); color: #d3d6d8; }
.insp-tabs .wide { flex: 0 0 64px; gap: 7px; justify-content: flex-start; }
.insp-tabs svg { height: 19px; width: 19px; }
.insp-tabs .w14 { width: 12px; height: 10px; } .insp-tabs .w10 { width: 9px; height: 9px; } .insp-tabs .w15 { width: 14px; height: 14px; } .insp-tabs .w22 { width: 22px; height: 16px; }
.strips { flex: 1; display: grid; grid-template-columns: 122px 122px; gap: 5px; padding: 4px 0 0 6px; background: #1f1f1f; }
.strip { display: flex; flex-direction: column; background: #303132; font-family: "Liberation Sans", "Noto Sans CJK SC", sans-serif; color: #7b8284; }
.strip section { padding: 0 5px; }
.strip section + section { border-top: 2px solid #191919; box-shadow: inset 0 1px #616465; }
.strip::after { content: ""; flex: 1; margin-bottom: 3px; border-top: 1px solid #666; background: #292a2a; }
.s-eq { height: 91px; }
.eq-top { display: flex; align-items: center; justify-content: space-between; height: 23px; margin-bottom: 8px; }
.eq-top button { width: 35px; height: 23px; background: #4c5051; border-radius: 2px; color: #d5d5d5; font-size: 14px; padding-bottom: 2px; }
.patch { width: 36px; height: 18px; } .pw { width: 17px; height: 17px; color: #ddd; } .eqgrid { width: 112px; height: 54px; }
.s-fx { height: 58px; }
.cap { display: flex; align-items: center; justify-content: space-between; height: 21px; font-size: 15px; }
.cap i { width: 12px; }
.on { width: 13px; height: 13px; color: #d08b47; } .add { width: 10px; height: 10px; color: #9a9ea0; }
.fxbox { height: 30px; border: 1px solid #262728; background: #2b2c2d; }
.s-send { height: 107px; }
.s-send .cap { height: 26px; }
.s-send .add { margin-bottom: 5px; }
.band { height: 20px; margin: 0 -5px; background: #2a2b2c; }
.knobs { display: flex; justify-content: space-between; color: #4c4e4f; font-size: 14px; }
.knobs div { display: flex; flex-direction: column; align-items: center; justify-content: flex-end; height: 57px; }
.knobs span { line-height: 14px; }
.knobs em { width: 17px; height: 17px; margin-bottom: 11px; border-radius: 50%; background: #4b4c4d; }
.k44 { width: 42px; height: 42px; } .k30 { width: 30px; height: 30px; margin-bottom: 4px; }
.s-mix { height: 392px; }
.btns { display: grid; grid-template-columns: repeat(4, 25px); gap: 5px; height: 55px; margin: 4px -1px 0; grid-auto-rows: 25px; }
.btns button, .t-b button, .t-r1 button, .t-foot button { width: 25px; height: 25px; background: #4c5051; border-radius: 2px; color: #d5d5d5; font: 700 14px/18px "Liberation Sans", sans-serif; }
.btns .lit, .t-b .lit { background: #d2d2d2; color: #222; }
sub { position: absolute; right: 1px; bottom: 0; font: 10px/12px "Liberation Sans", sans-serif; color: #1a1a1a; }
.dot { width: 13px; height: 13px; border-radius: 50%; background: #e53a3a; }
.pan { width: 44px; height: 44px; margin: 5px auto 0; }
.panval { height: 15px; padding-left: 14px; text-align: center; font-size: 14px; line-height: 15px; }
.panval b { color: #cfd4d6; font-weight: 400; font-size: 12px; }
.fader { display: grid; grid-template-columns: 46px 25px 43px; height: 175px; margin: 8px -1px 0; }
.scale { width: 46px; height: 175px; fill: #9a9c9d; font-size: 11px; text-anchor: end; }
.fader input { appearance: none; writing-mode: vertical-lr; direction: rtl; width: 25px; height: 173px; background: linear-gradient(90deg, transparent 10px, #18191a 10px, #18191a 15px, transparent 15px); }
.fader input::-webkit-slider-thumb { appearance: none; width: 25px; height: 36px; border-radius: 2px; background: linear-gradient(#828687, #5e6162 6px, #5e6162 16px, #e6f6fb 16px, #e6f6fb 20px, #686c6d 20px, #777b7c 32px, #454748); }
.fader.blue input::-webkit-slider-thumb { background: linear-gradient(#5b8390, #33505a 6px, #33505a 16px, #e6f6fb 16px, #e6f6fb 20px, #3a606c 20px, #426e7b 32px, #2b444d); }
.fader ol { display: flex; flex-direction: column; justify-content: space-between; height: 166px; padding: 12px 27px 12px 0; background: #242526; border-bottom: 1px solid #666; color: #8c867c; font: 10px/10px "Open Sans", sans-serif; text-align: right; }
.fader li { margin-left: -4px; }
.gain { margin-top: 9px; text-align: center; color: #b4b8ba; }
.kind { display: grid; place-items: center; width: 39px; height: 39px; margin: 10px auto 0; background: #292a2a; color: #eee; }
.kind svg { width: 30px; height: 26px; }
.s-io { height: 81px; }
.s-io h3 { font-size: 15px; font-weight: 400; line-height: 24px; text-align: center; }
.combo { display: flex; align-items: center; position: relative; height: 25px; background: #4c5051; border-radius: 2px; padding: 0 22px 0 4px; color: #d0d3d4; font: 14px/18px "Open Sans", "Noto Sans CJK SC", sans-serif; }
.combo b { flex: none; width: 12px; height: 12px; margin-right: 3px; background: #909394; color: #444; font: 700 9px/12px "Liberation Sans", sans-serif; text-align: center; }
.combo::after, .filter::after, .d-sel::after { content: ""; position: absolute; right: 6px; top: 8px; width: 9px; height: 9px; background: #ddd; clip-path: polygon(0 0, 100% 0, 50% 100%); }
.s-io .combo { margin: 0 -1px 2px; }
.s-io.one .combo { margin-top: 3px; padding-right: 16px; font-size: 13px; }
.strip .s-name { height: 57px; padding-top: 4px; text-align: center; }
.s-name strong { display: block; height: 20px; margin-bottom: 4px; background: #242628; color: #dcf3fa; font: 700 13px/20px "Open Sans", sans-serif; }
.s-name span { display: block; height: 23px; border: 1px solid #272727; border-bottom-color: #777; border-radius: 2px; color: #aaa; line-height: 20px; }
.display { width: 129px; height: 24px; margin: 6px 0 0; background: #37393a; border-radius: 3px 3px 0 0; color: #ccc; font-family: "Liberation Sans", sans-serif; font-size: 14px; }
.display svg { position: absolute; right: 8px; width: 7px; height: 9px; color: #666; }

/* arranger */
.arranger { display: flex; flex-direction: column; min-width: 0; margin-left: 1px; background: #4b4c4e; border-radius: 5px; overflow: hidden; }
.arr-head { display: flex; height: 25px; padding-left: 7px; padding-right: 26px; background: linear-gradient(#5d5f61, #4f5052); border-bottom: 1px solid #616365; }
.tab { width: 105px; justify-content: flex-start; padding: 0 0 2px 25px; border-right: 1px solid #333; color: #adb4b8; font-size: 15px; }
.tab i { position: absolute; right: 7px; top: 10px; border: 4px solid transparent; border-top-color: #bbb; }
.tab.view { margin-right: 314px; }
.tab.region { padding-left: 6px; }
.tab.fade { width: 37px; margin-left: auto; padding-left: 4px; border-left: 1px solid #333; }
.tab.close { width: 106px; padding-left: 4px; gap: 10px; font-size: 14px; }
.xf { width: 20px; height: 16px; } .rip { width: 18px; height: 16px; }
.tab .corner { color: #ccc; }
.arr-body { flex: 1; display: grid; grid-template-columns: 499px 30px 1fr 25px; min-height: 0; }
.tracks { display: flex; flex-direction: column; padding: 12px 0 7px 3px; }
.t-tools { display: flex; gap: 8px; height: 30px; padding: 0 1px 0 5px; }
.addtrack { width: 30px; background: #2f3132; } .addtrack svg { width: 16px; height: 16px; }
.filter { position: relative; flex: 1; background: #2f3030; }
.filter::after { top: 11px; background: #aaa; }
.t-edit { display: flex; height: 30px; margin: 18px 0 26px; background: #333; line-height: 28px; color: #ddd; }
.t-edit svg { width: 31px; height: 30px; margin-right: 11px; background: #53545b; }
.t-list { flex: 1; background: #1f1f1f; }
.track { display: flex; height: 125px; padding-left: 12px; border-top: 2px solid #191919; border-bottom: 1px solid #191919; background: linear-gradient(90deg, #262728 11px, #505253 11px, #505253 12px, #303132 12px); font-family: "Liberation Sans", "Noto Sans CJK SC", sans-serif; }
.track + .track { border-top: 0; box-shadow: inset 0 1px #5d6061; }
.t-left { width: 78px; display: flex; flex-direction: column; padding-left: 3px; }
.num { display: flex; justify-content: space-between; height: 27px; padding: 6px 9px 0 17px; font: 15px/15px "Open Sans", sans-serif; color: #ddd; }
.num svg { color: #eee; width: 17px; height: 17px; }
.kindbox { display: grid; place-items: center; width: 38px; height: 38px; margin: 8px 0 0 29px; background: #292a2a; color: #eee; }
.kindbox svg { width: 24px; height: 24px; }
.t-foot { display: flex; gap: 5px; margin-top: 21px; }
.t-main { width: 351px; }
.t-r1 { display: flex; align-items: center; gap: 6px; height: 27px; margin-bottom: 6px; }
.t-r1 strong { width: 114px; height: 24px; margin-right: 2px; padding-left: 4px; background: #242628; color: #dcf3fa; font: 700 14px/23px "Open Sans", sans-serif; }
.t-r1 button { width: 24px; height: 24px; }
.t-r1 .orange { background: #cd8843; color: #222; }
.coll { width: 10px; height: 12px; margin: 0 2px 0 auto; }
.t-r2 { display: flex; justify-content: space-between; }
.t-ctl { width: 116px; }
.t-b { display: flex; gap: 5px; margin: 6px 0; }
.t-b .dim { background: #3c3e3f; } .t-b svg { width: 16px; height: 16px; }
.t-ctl .combo { color: #fff; }
.t-ctl .combo:last-child { height: 24px; }
.t-fx { width: 117px; height: 87px; border: 1px solid #262728; background: #2b2c2d; }
.t-fx div { display: flex; align-items: center; gap: 5px; height: 19px; padding: 0 3px; background: #222324; color: #ccc; }
.t-fx .add { margin-left: auto; }
.t-meter { display: flex; gap: 2px; width: 50px; padding: 4px 0 4px 8px; }
.t-meter > i { width: 15px; background: #29292a; }
.t-meter ol { padding-top: 33px; color: #8c867c; font: 10px/10px "Open Sans", sans-serif; }
.vscale { padding: 117px 0 0; color: #7b7e80; }
.vs1 { display: flex; flex-direction: column; height: 125px; padding: 34px 8px 0 10px; border-bottom: 1px solid #999; font: 9px/9px "Open Sans", sans-serif; text-align: right; }
.vs1 .db { margin: 6px 0 10px; font-size: 11px; position: relative; }
.vs1 .db i { position: absolute; right: -8px; top: 4px; width: 6px; height: 2px; background: #111; }
.vs2 { display: flex; flex-direction: column; padding-top: 53px; font-size: 12px; }
.vs2 span { height: 23px; border-top: 1px solid #888; text-align: center; margin: 0 3px; line-height: 21px; }
.vs2 span:last-child { border-bottom: 1px solid #888; }
.clips { position: relative; display: flex; flex-direction: column; min-width: 0; padding: 5px 0 7px; }
.ruler { display: flex; height: 46px; border: 1px solid #999; border-left: 0; background: linear-gradient(#404445 37px, #8f9192 37px, #8f9192 38px, #404243 38px); overflow: hidden; }
.bar { flex: none; width: 226px; height: 37px; background: linear-gradient(90deg, #777 1px, transparent 1px) 0 18px / 226px 19px no-repeat, linear-gradient(90deg, #777 1px, transparent 1px) 0 31px / 57px 6px repeat-x; color: #9ca2a5; font-size: 12px; line-height: 54px; padding-left: 3px; }
.lane-hint { height: 30px; margin: 9px 0 26px; background: #333; text-align: center; line-height: 28px; color: #a0a0a0; font-size: 16px; }
.lanes { flex: 1; background: #1f1f1f; }
.lanes div { height: 124px; background: #3b3c3e; border-top: 2px solid #262728; box-shadow: inset 0 1px #505153; }
.playhead { position: absolute; left: -1px; top: 18px; bottom: 0; width: 2px; background: #c5c7c8; }
.playhead svg { position: absolute; left: -14px; top: -18px; width: 29px; height: 19px; }
.vscroll { display: flex; flex-direction: column; align-items: center; padding: 33px 5px 9px 2px; color: #c8c8c8; }
.vadd { width: 17px; height: 18px; margin-bottom: 68px; background: #2f3132; } .vadd svg { width: 14px; height: 14px; }
.up { width: 9px; height: 9px; margin: 2px 0 6px; }
.vthumb { flex: 1; width: 16px; background: #bcbcbc; margin-bottom: 4px; }
.mg { width: 17px; height: 18px; }
.vscroll > i { width: 14px; height: 8px; margin: 2px 0; background: #bcbcbc; }
.arr-foot { display: flex; align-items: center; height: 32px; padding-bottom: 3px; border-top: 2px solid #0c0c0c; background: #4b4c4b; }
.eject { width: 25px; height: 24px; margin-left: 476px; background: #2f3132; } .eject svg { width: 10px; height: 11px; }
.hscroll { flex: 1; display: flex; align-items: center; padding: 0 29px 0 35px; }
.ar { width: 8px; height: 10px; } .rt { margin: 0 14px 0 auto; }
.hthumb { width: 20px; height: 20px; margin-left: 9px; background: #bcbcbc; }
.hz { align-self: flex-end; width: 8px; height: 8px; margin: 0 5px 0 4px; background: #bcbcbc; }

/* browser and help */
.side { display: flex; flex-direction: column; gap: 7px; }
.browser { height: 515px; background: #4a4b4a; border-radius: 5px; overflow: hidden; }
.b-tabs { display: flex; height: 24px; gap: 1px; background: #1b1b1b; margin-bottom: 6px; }
.b-tabs button { width: 102px; justify-content: flex-start; gap: 9px; padding-left: 5px; background: #424446; color: #92989b; font: 14px/18px "Liberation Sans", sans-serif; }
.b-tabs button svg { width: 18px; height: 18px; }
.b-tabs .cur { background: linear-gradient(#5d5f61, #4b4c4b); color: #c6cdd1; padding-left: 4px; gap: 6px; }
.b-tabs .cur .tri { width: 8px; height: 9px; margin-left: auto; margin-right: 5px; color: #777; }
.b-ctl { flex: 1; display: flex; align-items: center; justify-content: flex-end; gap: 6px; padding-right: 11px; background: linear-gradient(#5d5f61, #4b4c4b); color: #ddd; }
.b-ctl .w14 { width: 12px; }
.b-kinds { display: flex; gap: 5px; padding-left: 7px; margin-bottom: 6px; }
.b-kinds button { width: 33px; height: 25px; background: #2d2f30; border-radius: 2px; color: #ccc; }
.b-kinds .afx { width: 91px; background: #cd8843; color: #222; font: 14px/18px "Liberation Sans", sans-serif; }
.b-kinds svg { width: 20px; height: 18px; }
.b-search { display: flex; gap: 6px; padding: 0 5px 0 7px; height: 28px; margin-bottom: 9px; }
.b-search label { flex: 1; display: flex; align-items: center; padding-right: 6px; background: #2d2d2d; border-radius: 3px; }
.b-search input { flex: 1; outline: 0; padding: 0 6px; }
.b-search svg { width: 15px; height: 15px; }
.b-search button { width: 32px; background: #2d2f30; border-radius: 3px; }
.tree { height: 391px; margin: 0 7px 0 8px; padding: 0 0 0 8px; border: solid #1f1f1f; border-width: 4px 5px 2px; background: #2f2f2f; color: #b4babd; }
.tree li { display: flex; align-items: center; gap: 6px; position: relative; height: 25px; padding-bottom: 1px; font-size: 15px; }
.tree li::before { content: ""; position: absolute; left: 5px; top: 0; width: 14px; height: 25px; border-left: 1px dotted #777; background: linear-gradient(90deg, #777 1px, transparent 1px) 0 12px / 2px 1px repeat-x; }
.tree li:first-child::before { top: 12px; height: 13px; background-position: 0 0; }
.tree .leaf::before { height: 13px; }
.tree i { position: relative; width: 12px; height: 12px; margin-right: 1px; background: linear-gradient(#2b4a9a, #2b4a9a) center / 6px 2px no-repeat, linear-gradient(#2b4a9a, #2b4a9a) center / 2px 6px no-repeat, #eee; border: 1px solid #999; }
.tree svg { width: 21px; height: 17px; }
.tree .leaf svg { width: 20px; height: 20px; margin: 0 1px 0 19px; }
.help { flex: 1; display: flex; flex-direction: column; padding: 0 7px 6px; background: linear-gradient(#5d5f61, #4b4c4b 30px); border-radius: 5px; }
.h-head { display: flex; align-items: center; gap: 6px; height: 30px; padding: 0 4px 2px; color: #ddd; }
.h-head h2 { flex: 1; padding-top: 6px; color: #c0c6c9; font-size: 15px; font-weight: 400; }
.dd { width: 10px; height: 12px; margin-left: 2px; }
.h-body { flex: 1; border: 3px solid #242424; background: #2f2f2f; }

.dock { grid-column: 2 / 4; margin-left: 1px; display: flex; background: #4b4c4b; border-radius: 5px; overflow: hidden; }
.dock-tab { display: flex; align-items: center; gap: 14px; width: 94px; padding-left: 11px; color: #b4bcc0; font-size: 17px; background: linear-gradient(#4b4c4b, #5d5f61); }
.dock-tab svg { width: 10px; height: 10px; }
.dock-rest { flex: 1; margin-top: 6px; padding-right: 10px; border-top: 1px solid #6b6c6b; border-left: 2px solid #2b2b2b; text-align: right; }
.mark { color: #ddd; font-size: 19px; line-height: 22px; text-shadow: 1px 1px #222; }
.taskline { height: 1px; padding-left: 60px; background: #1d303b; }
.taskline i { display: block; width: 360px; height: 1px; background: #ddd; }

/* add-track dialog */
.dialog { position: absolute; left: 352px; top: 5px; width: 361px; height: 412px; display: flex; flex-direction: column; padding: 0 4px 3px; border: 2px solid #2c2c2c; border-radius: 8px 8px 6px 6px; background: #c4c4c4; box-shadow: 4px 4px 8px rgba(0, 0, 0, .6); }
.pointer { position: absolute; left: -24px; top: 176px; width: 24px; height: 58px; }
.d-title { display: flex; align-items: center; justify-content: center; height: 27px; color: #222; }
.d-title h2 { flex: 1; text-align: center; font-size: 14px; font-weight: 400; line-height: 24px; margin-right: -18px; padding: 0 20px 2px 0; }
.d-title button { width: 18px; height: 18px; } .d-title svg { width: 9px; height: 9px; }
.d-in { flex: 1; display: flex; flex-direction: column; border: 2px solid #141414; background: #3b3b3d; }
.d-tabs { display: flex; height: 62px; border-bottom: 1px solid #2c2c2c; background: linear-gradient(#5d5e5e, #4b4c4d); font-size: 20px; }
.d-tabs button { height: 53px; flex: 1; justify-content: flex-start; }
.d-tabs .audio { background: #484949; color: #868888; border: solid #3a3a3a; border-width: 0 1px 1px 0; padding: 6px 0 0 18px; gap: 35px; }
.d-tabs .audio svg { width: 24px; height: 32px; }
.d-tabs .inst { height: 61px; padding: 0 0 2px 14px; gap: 43px; color: #ddd; }
.d-tabs .inst svg { width: 30px; height: 30px; }
.d-body { height: 251px; padding: 10px 14px 0 15px; }
.d-body label { display: block; height: 23px; color: #a4a4a4; }
.d-sel { position: relative; height: 32px; border: 1px solid #222; border-radius: 3px; background: linear-gradient(#454646, #515252); }
.d-sel select { height: 28px; padding-left: 8px; color: #ccc; }
.d-sel::after { right: 10px; top: 11px; }
.focus::before { content: ""; position: absolute; inset: -3px; background: linear-gradient(#fff, #fff) 0 0 / 5px 2px, linear-gradient(#fff, #fff) 0 0 / 2px 5px, linear-gradient(#fff, #fff) 100% 0 / 5px 2px, linear-gradient(#fff, #fff) 100% 0 / 2px 5px, linear-gradient(#fff, #fff) 0 100% / 5px 2px, linear-gradient(#fff, #fff) 0 100% / 2px 5px, linear-gradient(#fff, #fff) 100% 100% / 5px 2px, linear-gradient(#fff, #fff) 100% 100% / 2px 5px; background-repeat: no-repeat; pointer-events: none; }
.d-sel.two { margin-top: 30px; background: linear-gradient(#5a5c5c, #454747); }
.d-body hr { border: 0; border-top: 1px solid #555; margin: 13px -14px 0 -15px; }
.d-body hr.low { margin-top: 68px; border-top-color: #2a2a2a; }
.d-foot { flex: 1; padding: 15px 14px 0 0; border-top: 1px solid #222; background: #4a4b4c; }
.d-foot button { width: 152px; height: 33px; margin-left: auto; padding-bottom: 2px; border: 1px solid #2e2e2e; border-radius: 3px; background: linear-gradient(#565758, #484a4a); color: #999; font-size: 20px; }

/* drop-down menus */
.menu { position: absolute; left: 375px; top: 161px; width: 188px; padding: 1px 2px 2px; border: 1px solid #000; background: #e2e2e2; color: #111; font-size: 16px; }
.menu li { display: flex; align-items: center; position: relative; height: 29px; padding: 0 0 2px 25px; }
.menu .sep { height: 13px; padding: 0; }
.menu .sep::before { content: ""; flex: 1; height: 1px; margin: 0 3px; background: #999; }
.menu svg { position: absolute; left: 3px; width: 17px; height: 14px; }
.menu .sub::after { content: ""; position: absolute; right: 8px; width: 7px; height: 7px; border: solid #000; border-width: 3px 3px 0 0; transform: rotate(45deg); }
.menu .sel { background: linear-gradient(transparent 2px, #a3d0ff 2px, #a3d0ff 27px, transparent 27px); }
.submenu { left: 564px; top: 304px; width: 242px; }
.submenu li { padding: 0 4px 1px 25px; justify-content: space-between; }
.submenu span { color: #56708c; }
```
